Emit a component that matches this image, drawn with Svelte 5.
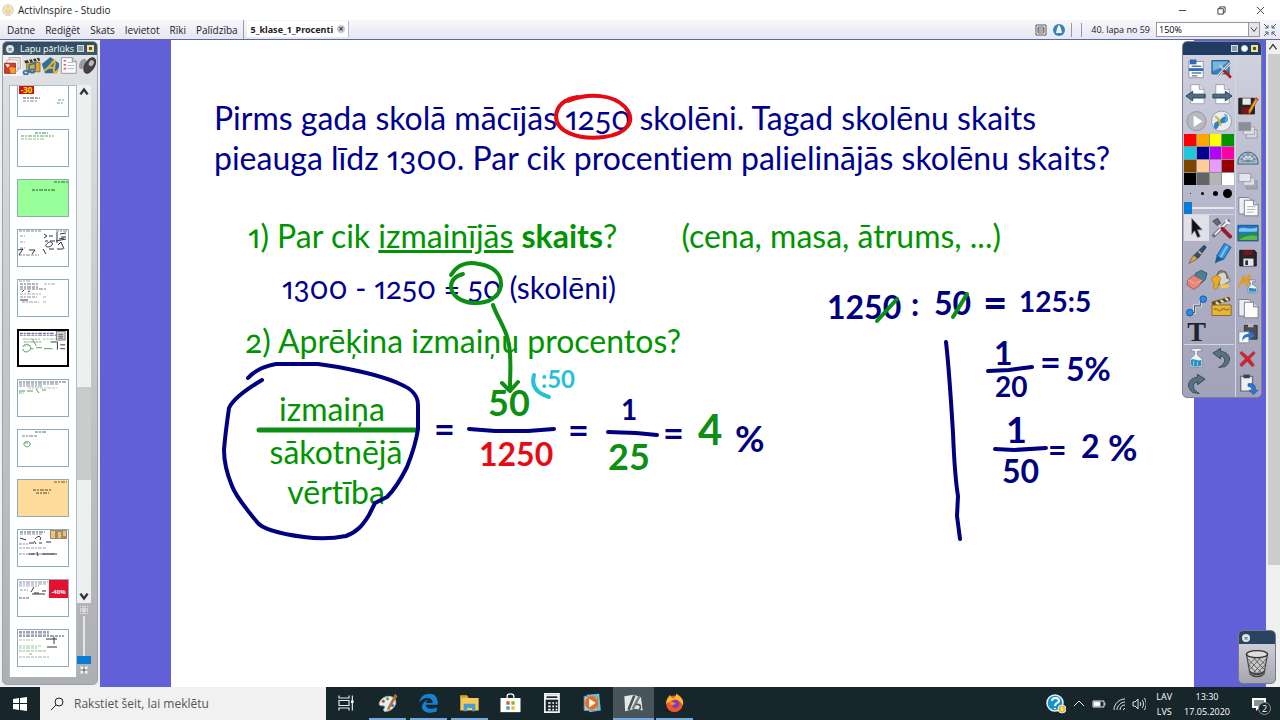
<script>
  const menus = ['Datne', 'Rediģēt', 'Skats', 'Ievietot', 'Rīki', 'Palīdzība'];

  const browserTabs = ['pages', 'media', 'shapes', 'notes', 'votes'];

  // lines: [x, y, width, colour] in a 52 x 38 box
  const pages = [
    { id: 35, kind: 'sale30', lines: [[22, 4, 12, '#b48'], [38, 4, 10, '#446'], [5, 18, 17, '#446'], [5, 21, 14, '#889'], [40, 20, 6, '#6a6'], [39, 23, 7, '#6a6']] },
    { id: 36, lines: [[17, 3, 13, '#384'], [3, 6, 33, '#5a5'], [3, 9, 23, '#8b8']] },
    { id: 37, bg: '#99ff99', lines: [[36, 2, 14, '#363'], [14, 10, 23, '#252']] },
    { id: 38, ink: 'M26 4l3 2-3 2m5-2h4m4-4v11m3-9l6-1m-5 4h5m-21 4h3m2 0h5m4-2l5-1m-18 7c3-5 8-3 6 0s-8 2-6 0m10-4l10-2m-8 6l3-3 3 7m-21 0l3 5m3-5h5m3 0h6m-45 1l5-1-4 6m10-5h6l-3 4', lines: [[1, 1, 22, '#888'], [2, 6, 5, '#99b'], [2, 12, 5, '#99b'], [2, 18, 5, '#99b'], [1, 25, 20, '#888'], [38, 1, 11, '#888']] },
    { id: 39, ink: 'M4 12l2-2m4 2l2-1M2 20h8', lines: [[1, 1, 12, '#99a'], [2, 4, 19, '#667'], [26, 4, 12, '#aaa'], [2, 7, 18, '#667'], [2, 9, 26, '#778'], [2, 14, 21, '#aaa'], [2, 17, 17, '#889'], [25, 17, 4, '#aaa'], [4, 22, 17, '#99a'], [25, 22, 4, '#aaa']] },
    { id: 40, current: true, ink: 'M33 12h7m0 0v8m3-5h5m-5 4h5', green: 'M4 17c3-5 9-2 8 2s-8 5-8 0m8 0h3m3-1h6m2 1h4m0 0h5M14 9l4 7', lines: [[1, 3, 35, '#448'], [1, 5, 43, '#668'], [4, 9, 18, '#7b7'], [25, 9, 16, '#9c9'], [5, 12, 18, '#88a'], [4, 16, 8, '#8b8']] },
    { id: 41, green: 'M1 11h6m2 0h6m3-2l3 4m3-3h4', lines: [[1, 2, 48, '#667'], [1, 4, 40, '#88a'], [1, 6, 24, '#88a'], [10, 8, 29, '#9c9'], [1, 13, 5, '#7b7']] },
    { id: 42, green: 'M6 13c3-3 7-1 6 2s-7 2-6-2', lines: [[17, 2, 12, '#384'], [4, 6, 15, '#778'], [7, 13, 4, '#7b7']] },
    { id: 43, bg: '#ffdc9a', lines: [[36, 2, 13, '#654'], [15, 10, 19, '#543'], [18, 13, 13, '#543']] },
    { id: 44, kind: 'photo', ink: 'M2 8l6 2m9-1c3-4 7-3 5 1M11 13h5m0-2l2 3m3-1h3m4-1h5M11 24h6m2-2l1 4m4-2h15', lines: [[2, 2, 25, '#556'], [2, 4, 22, '#88a'], [1, 14, 9, '#88a'], [1, 18, 27, '#99a'], [1, 24, 35, '#889']] },
    { id: 45, kind: 'sale40', ink: 'M13 12l3-5m0 6h5m3-2h4M14 14h13', lines: [[1, 2, 29, '#88a'], [1, 4, 27, '#99b'], [1, 6, 20, '#aab'], [2, 10, 8, '#99a'], [1, 18, 10, '#556']] },
    { id: 46, ink: 'M28 9h11m-3-2v7m-7 3h10', lines: [[1, 2, 31, '#446'], [1, 4, 30, '#88a'], [1, 6, 45, '#446'], [1, 10, 14, '#9c9'], [1, 16, 22, '#9c9'], [1, 18, 19, '#9c9'], [1, 21, 28, '#8b8'], [11, 24, 4, '#7b7'], [1, 27, 30, '#aaa']] }
  ];

  const topTools = ['menu', 'desktop', 'prev', 'next', 'play', 'paint'];
  const swatches = [
    ['red', '#ff0000'], ['orange', '#ffa500'], ['yellow', '#ffff00'], ['green', '#009400'],
    ['cyan', '#20c6dc'], ['navy', '#000096'], ['violet', '#b400ff'], ['pink', '#ff00a8'],
    ['brown', '#7d4600'], ['peach', '#ffcc99'], ['lilac', '#e79cff'], ['maroon', '#960000'],
    ['black', '#000000'], ['dark grey', '#646464'], ['grey', '#b4b4b4'], ['white', '#ffffff']
  ];
  const penSizes = [1, 3, 5, 9];
  const mainTools = ['select', 'tools', 'pen', 'highlighter', 'eraser', 'fill', 'connector', 'clapper', 'text', ''];
  const editTools = ['clear', 'undo', 'redo', ''];
  const sideTools = ['savepen', 'layers', 'protractor', 'stack', 'copypage', 'image', 'disk', 'cleanink', 'copy', 'paste', 'delete', 'clipboard'];

  const apps = [
    { name: 'taskview' },
    { name: 'palette', open: true },
    { name: 'edge', open: true },
    { name: 'explorer', open: true },
    { name: 'store' },
    { name: 'calc' },
    { name: 'player' },
    { name: 'inspire', open: true, active: true },
    { name: 'firefox', open: true }
  ];

  // handwritten figures: [text, x, baseline, colour, size]
  const notes = [
    ['50', 488, 416, 'green', 36],
    ['1250', 479, 466, 'red', 32],
    [':50', 541, 388, 'cyan', 24],
    ['=', 434, 442, 'navy', 36],
    ['=', 568, 443, 'navy', 36],
    ['1', 621, 420, 'navy', 28],
    ['25', 608, 470, 'green', 36],
    ['=', 663, 446, 'navy', 36],
    ['4', 698, 445, 'green', 42],
    ['%', 735, 452, 'navy', 36],
    ['1250', 827, 319, 'navy', 32],
    [':', 911, 316, 'navy', 32],
    ['50', 934, 315, 'navy', 32],
    ['=', 983, 318, 'navy', 42],
    ['125:5', 1019, 312, 'navy', 28],
    ['1', 994, 365, 'navy', 32],
    ['20', 995, 397, 'navy', 28],
    ['=', 1040, 375, 'navy', 36],
    ['5%', 1066, 381, 'navy', 32],
    ['1', 1006, 443, 'navy', 36],
    ['50', 1002, 483, 'navy', 32],
    ['=', 1048, 462, 'navy', 32],
    ['2', 1081, 458, 'navy', 32],
    ['%', 1108, 461, 'navy', 36]
  ];

  let search = $state('');
  let zoom = $state('150%');
  let thumbSize = $state(0);
  let penWidth = $state(0);
</script>

{#snippet icon(name)}
  <svg class="icon" viewBox="0 0 24 24" aria-hidden="true">
    {#if name === 'menu'}
      <path d="M4 5h15v17H4z" fill="#fff" stroke="#8a94a8" />
      <path d="M5 3h7v5H5z" fill="#3268b4" />
      <path d="M7 10h10M7 17h10M7 20h6" stroke="#6a7688" stroke-width="1.4" />
      <path d="M4 12h15v3H4z" fill="#2b6cc4" />
    {:else if name === 'desktop'}
      <path d="M2 4h18v14H2z" fill="#3b82bc" stroke="#2a5f92" />
      <path d="M3 5h16l-9 7-7 3z" fill="#79b6df" />
      <path d="M21 7L9 20" stroke="#dfe4ea" stroke-width="3" />
      <path d="M21 7L9 20" stroke="#59636f" />
      <path d="M10 9l6 6" stroke="#c6ccd4" stroke-width="2" />
      <path d="M15 15l6 6" stroke="#b01c26" stroke-width="3" stroke-linecap="round" />
    {:else if name === 'prev' || name === 'next'}
      <path d="M6 2h9l5 5v15H6z" fill="#fafbfc" stroke="#9da3b0" />
      <path d="M15 2v5h5" fill="#d9dde4" stroke="#9da3b0" />
      {#if name === 'prev'}
        <path d="M1 14l7-5v3h13v4H8v3z" fill="#4a6f86" stroke="#294455" />
      {:else}
        <path d="M23 14l-7-5v3H3v4h13v3z" fill="#4a6f86" stroke="#294455" />
      {/if}
    {:else if name === 'play'}
      <circle cx="12" cy="12" r="10" fill="#b7b9c0" stroke="#9294a0" />
      <path d="M9 6l9 6-9 6z" fill="#fff" />
    {:else if name === 'paint'}
      <circle cx="12" cy="12" r="10.500" fill="#e8edf2" stroke="#8fa0b0" />
      <path d="M4 18C4 11 8 14 12 9c4-4 9-1 6 3-3 3-7 1-9 5-1 4-4 4-5 1z" fill="#2f84c0" />
      <path d="M15 5c3 1 4 4 1 7" stroke="#63b3dd" stroke-width="2" fill="none" />
      <path d="M5 7c4 1 5 5 6 10" stroke="#e5b32e" stroke-width="2" fill="none" />
    {:else if name === 'select'}
      <path d="M7 2l11 12h-5l3 7-3 1-3-7-3 4z" fill="#111" stroke="#8d8f96" stroke-width=".7" />
    {:else if name === 'tools'}
      <path d="M4 20L19 5" stroke="#6d7480" stroke-width="4" stroke-linecap="round" />
      <path d="M5 19L19 5M17 3v4h4" stroke="#eceff2" stroke-width="2" fill="none" />
      <path d="M3 5l5-3 3 5-3 3z" fill="#606873" stroke="#444b55" />
      <path d="M9 9l4 4" stroke="#c8cdd3" stroke-width="2.500" />
      <path d="M13 13l8 8" stroke="#9c1a28" stroke-width="4" stroke-linecap="round" />
    {:else if name === 'pen'}
      <path d="M20 3l2 2-8 11-5 1 1-4z" fill="#31536d" stroke="#1e3547" />
      <path d="M14 9l3 3" stroke="#d7b463" stroke-width="2" />
      <path d="M9 13l4 4-9 5z" fill="#d8a94c" stroke="#7c5a22" stroke-width=".8" />
    {:else if name === 'highlighter'}
      <path d="M15 1l7 4-8 13-7-4z" fill="#2f8fdc" stroke="#1b5d9c" />
      <path d="M17 3l2 1-7 12-2-1z" fill="#79c2f3" />
      <path d="M7 14l7 4-5 2-4 2z" fill="#1c5b96" />
    {:else if name === 'eraser'}
      <path d="M11 5l6-3 6 3-2 7-5 4-7-4z" fill="#4b8094" stroke="#34606f" />
      <path d="M9 7l9 5-3 6-6 4-7-5 1-5z" fill="#e58677" stroke="#a35750" />
      <path d="M3 12l8 4 7-4" stroke="#f5b3a6" fill="none" />
    {:else if name === 'fill'}
      <path d="M7 6l9-3 5 10-10 6z" fill="#d9d5cb" stroke="#777265" />
      <path d="M8 7c0-7 10-6 10 4" stroke="#6f6a60" fill="none" stroke-width="1.500" />
      <path d="M2 10c5-5 10-1 9 2-3 4-2 7-4 9s-4 0-3-4-3-2-2-7z" fill="#e8ac26" stroke="#a87408" stroke-width=".7" />
      <path d="M10 19c2-3 9-3 10-1s-7 4-10 1z" fill="#f3c84e" />
    {:else if name === 'connector'}
      <path d="M5 19h5v-7h6V6h3" stroke="#e4e8ed" stroke-width="3" fill="none" />
      <path d="M5 19h5v-7h6V6h3" stroke="#4d5b6b" stroke-width="1.200" fill="none" />
      <circle cx="5" cy="19" r="3.500" fill="#2a8ce6" stroke="#1b5ca0" />
      <circle cx="19" cy="5" r="3.500" fill="#2a8ce6" stroke="#1b5ca0" />
    {:else if name === 'clapper'}
      <path d="M2 11h20v11H2z" fill="#e6b53d" stroke="#8d6a16" />
      <path d="M2 8l18-5 1 3-18 5z" fill="#5d4a1a" stroke="#6f5718" />
      <path d="M6 8l3 2M11 6l3 2M16 4l3 2" stroke="#f6e6b4" stroke-width="2" />
      <path d="M4 16c3-4 5 4 8 0s5 3 8-1" stroke="#ad7f14" fill="none" stroke-width="1.500" />
    {:else if name === 'clear'}
      <path d="M8 2h9v3h-4v4l5 4v8l-3 1H8l-3-2v-7l5-4V5H6z" fill="#eff3f6" stroke="#8992a0" />
      <path d="M6 14c4-2 7 2 11 0v6l-2 1H8l-2-2z" fill="#2d8dc3" />
      <path d="M9 15v5M13 16v4" stroke="#9bd4ee" />
    {:else if name === 'undo' || name === 'redo'}
      {#if name === 'undo'}
        <path d="M3 7l8-5v3c9 1 13 9 5 16l-7 1c8-4 8-11 2-12v3z" fill="#587080" stroke="#364b59" />
      {:else}
        <path d="M21 7l-8-5v3C4 6 0 14 8 21l7 1C7 18 7 11 13 10v3z" fill="#587080" stroke="#364b59" />
      {/if}
    {:else if name === 'savepen'}
      <path d="M2 4h17v17H2z" fill="#25272b" stroke="#111" />
      <path d="M6 4h9v7H6z" fill="#ece9e9" /><path d="M5 14h10v7H5z" fill="#7b151b" />
      <path d="M23 5l-8 14-2 2v-4l8-14z" fill="#f1a72b" stroke="#9c5a10" stroke-width=".8" />
      <path d="M21 3l3 2-2 2-3-2z" fill="#d45b45" />
    {:else if name === 'layers' || name === 'stack'}
      <path d="M10 11h12v9H10z" fill={name === 'stack' ? '#a2a5ad' : '#d6d8e0'} stroke="#90939d" />
      <path d="M7 8h12v8H7z" fill="#e0e1e7" stroke="#a2a4ae" />
      <path d="M2 3h13v9H2z" fill={name === 'stack' ? '#e4e5eb' : '#8b8d97'} stroke="#9497a1" />
    {:else if name === 'protractor'}
      <path d="M1 18a11 11 0 0 1 22 0v2H1z" fill="#a9bdce" stroke="#395972" />
      <path d="M5 17a7 7 0 0 1 14 0z" fill="#dbe5ef" stroke="#5a7a92" />
      <path d="M12 7v10M5 9l7 8 7-8M2 14l10 3 10-3" fill="none" stroke="#4c6b82" stroke-width=".7" />
    {:else if name === 'copypage' || name === 'copy'}
      <path d="M2 2h11l3 3v15H2z" fill="#eceef2" stroke="#777d88" />
      <path d="M8 5h10l5 5v12H8z" fill="#fdfdfd" stroke="#777d88" />
      <path d="M18 5v5h5" fill="#ccd0d8" stroke="#777d88" />
      {#if name === 'copypage'}<path d="M11 12h9M11 15h9M11 18h7" stroke="#a5abb7" />{/if}
    {:else if name === 'image'}
      <path d="M1 4h22v17H1z" fill="#1c77ce" stroke="#1a4d7d" />
      <path d="M2 8c6-4 10 2 20-2v5H2z" fill="#80c6f1" />
      <path d="M2 15c5-4 8 0 12-2 4-1 7-3 8-2v9H2z" fill="#278e3a" />
      <path d="M2 20c6-4 12-6 20-4v4z" fill="#56b956" />
    {:else if name === 'disk'}
      <path d="M3 4h16l2 2v15H3z" fill="#25272b" stroke="#111" />
      <path d="M7 4h10v5H7z" fill="#7b151b" /><path d="M7 13h11v8H7z" fill="#e6e6e8" /><path d="M9 15h3v5H9z" fill="#303238" />
    {:else if name === 'cleanink'}
      <path d="M2 16L8 4l-1 9 7-10-3 11 5-5" stroke="#e09a24" stroke-width="2.200" fill="none" stroke-linecap="round" />
      <path d="M13 9h7v2h-3v3l5 3v6H12v-5l3-4z" fill="#eef2f6" stroke="#7f8999" />
      <path d="M13 18c3-1 5 1 8 0v4h-8z" fill="#2d8dc3" />
    {:else if name === 'paste'}
      <path d="M8 3h14v15H8z" fill="#4a4f59" stroke="#2c3038" /><path d="M12 1h6v4h-6z" fill="#b5b9c0" />
      <path d="M2 10h11v12H2z" fill="#fafbfd" stroke="#868d99" />
      <path d="M6 20c-1-6 3-8 8-8V9l5 5-5 5v-3c-4-1-6 1-8 4z" fill="#2e74d2" />
    {:else if name === 'delete'}
      <path d="M5 4l7 6 6-6 2 2-6 6 5 7-2 2-6-6-6 6-2-3 6-6-6-6z" fill="#cc2434" stroke="#b0303c" stroke-width=".6" />
    {:else if name === 'clipboard'}
      <path d="M4 3h13v16H4z" fill="#eceff4" stroke="#6b717d" stroke-width="1.500" />
      <path d="M7 1h7v4H7z" fill="#3d424d" />
      <path d="M12 11c6-1 9 2 8 7h3l-5 5-5-5h3c0-3-1-4-4-4z" fill="#2e74d2" stroke="#1c4d93" stroke-width=".6" />
    {:else if name === 'trash'}
      <path d="M3 4l3 17c3 3 9 3 12 0l3-17z" fill="#c9c9cb" stroke="#444" />
      <path d="M4 8l13 13M8 6l10 11M12 6l7 7M20 8L8 21M16 6L6 17M12 6l-7 7M5 13l8 9M19 13l-8 9" fill="none" stroke="#4c4c50" stroke-width=".7" />
      <ellipse cx="12" cy="4" rx="9" ry="3" fill="#dedee0" stroke="#333" stroke-width="1.200" />
      <path d="M6 20c3 3 9 3 12 0v-2c-4 3-9 3-12 0z" fill="#444" />
    {:else if name === 'pages'}
      <path d="M8 2h14v14H8z" fill="#f8f4ee" stroke="#9b8e80" /><path d="M5 5h14v14H5z" fill="#fff" stroke="#a58" stroke-width=".6" />
      <path d="M2 9h14v13H2z" fill="#d63b28" stroke="#8d2114" /><path d="M8 14l8 1v7h-6z" fill="#f0a52d" /><path d="M3 10l6 1-3 4z" fill="#fff" />
    {:else if name === 'media'}
      <path d="M6 8h17v12H6z" fill="#e6ab29" stroke="#7d5c12" /><path d="M3 6l19-4 1 4-19 3z" fill="#333" /><path d="M8 5l2 3M13 4l2 3M18 3l2 3" stroke="#fff" stroke-width="1.500" />
      <path d="M9 11v9M2 21c0-3 6-3 6 0s-6 3-6 0M9 11l8-2v9M10 19c0-3 6-3 6 0s-6 3-6 0" stroke="#2e74a8" stroke-width="2" fill="none" />
    {:else if name === 'shapes'}
      <path d="M12 1l12 9-4 12H5L1 10z" fill="#2f6f9e" /><path d="M4 19C12 14 14 7 17 6c2 3-2 14 0 15 2 0 4-2 5-4M8 15h10" stroke="#efb434" stroke-width="2.500" fill="none" />
    {:else if name === 'notes'}
      <path d="M3 2h14l5 5v15H3z" fill="#fafafa" stroke="#84878e" /><path d="M17 2v5h5" fill="#d1d3d8" stroke="#84878e" /><path d="M6 6h3M6 11h3M6 16h3" stroke="#d15b80" stroke-width="2" /><path d="M11 8h7M11 12h8M11 16h8" stroke="#a4a8b2" />
    {:else if name === 'votes'}
      <ellipse cx="6" cy="10" rx="4" ry="7" fill="#969aa2" transform="rotate(25 6 10)" /><ellipse cx="15" cy="12" rx="6" ry="11" fill="#4b4243" stroke="#292425" transform="rotate(30 15 12)" /><ellipse cx="17" cy="9" rx="3" ry="4" fill="#b9b9be" transform="rotate(30 17 9)" />
    {:else if name === 'taskview'}
      <path d="M3 3v3h12V3M3 21v-3h12v3M3 9h12v6H3zM19 3v18" fill="none" stroke="#e6eaeb" stroke-width="1.400" /><path d="M17.500 9h3v3h-3z" fill="#fff" />
    {:else if name === 'palette'}
      <path d="M2 13C3 6 13 1 20 6c5 5 0 15-9 16-5 1-4-3-2-5 0-3-7 0-7-4z" fill="#e5edf1" stroke="#9eb8c4" />
      <circle cx="7" cy="10" r="1.800" fill="#cf3c32" /><circle cx="12" cy="7" r="1.800" fill="#5d9e3c" /><circle cx="18" cy="15" r="1.800" fill="#2b77bb" /><circle cx="14" cy="19" r="1.800" fill="#e0b62d" />
      <path d="M21 1l3 3-9 14-4 3 2-5z" fill="#b66d39" />
    {:else if name === 'edge'}
      <path d="M1 11C2 5 7 1 13 1c7 0 11 5 10 13H9c0 6 8 6 13 3v5C10 27 0 20 6 12c2-3 4-4 6-4-2 1-3 2-3 4h8c0-8-11-8-16-1z" fill="#1780d4" />
    {:else if name === 'explorer'}
      <path d="M1 3h8l2 3h12v15H1z" fill="#f6c95b" /><path d="M1 3h8l2 3H1z" fill="#d99e2b" /><path d="M5 13h14v9h-4v-4H9v4H5z" fill="#4a9cd2" />
    {:else if name === 'store'}
      <path d="M8 8V4c0-4 8-4 8 0v4" stroke="#fff" stroke-width="1.500" fill="none" /><path d="M0 6h24v17H0z" fill="#fff" /><path d="M7 10h4v4H7z" fill="#e8502c" /><path d="M13 10h4v4h-4z" fill="#79b82f" /><path d="M7 16h4v4H7z" fill="#2a9fdc" /><path d="M13 16h4v4h-4z" fill="#f5b81d" />
    {:else if name === 'calc'}
      <path d="M4 1h17v22H4z" fill="none" stroke="#f2f4f4" stroke-width="2" /><path d="M4 2h17v6H4z" fill="#f2f4f4" /><path d="M6 4h13v2H6z" fill="#17262b" />
      <path d="M8 12h3m2 0h2m2 0h2M8 16h3m2 0h2m2 0h2M8 20h3m2 0h2m2 0h2" stroke="#fff" stroke-width="2" />
    {:else if name === 'player'}
      <path d="M5 2l15-1 2 20-14 2z" fill="#77bcdf" /><path d="M2 4h16v17H2z" fill="#a8c8d8" stroke="#6a9db8" /><circle cx="11" cy="12" r="8" fill="#e46f22" /><path d="M8 7l8 5-8 5z" fill="#fff" />
    {:else if name === 'inspire'}
      <path d="M1 4l11-2 9 3 2 16-9-2-12 3z" fill="#e4e6e7" /><path d="M13 3L6 20" stroke="#4b5257" stroke-width="3" /><path d="M19 4l-8 15" stroke="#777f84" stroke-width="3" /><path d="M15 14c6-2 7 5 3 6" stroke="#555" stroke-width="2" fill="none" />
    {:else if name === 'firefox'}
      <circle cx="12" cy="13" r="10" fill="#f2552c" /><path d="M2 13C2 8 4 5 7 2c0 3 2 4 4 4C13 5 14 3 14 1c6 3 10 8 8 14C19 8 12 6 7 10z" fill="#fdb92b" /><circle cx="13" cy="13" r="5" fill="#7840bd" /><path d="M6 11c3-1 5 0 8 2-3 0-3 3-7 1z" fill="#ff8b24" />
    {/if}
  </svg>
{/snippet}

<div class="window">
  <header class="titlebar">
    <svg class="logo" viewBox="0 0 24 24" aria-hidden="true">
      <circle cx="12" cy="12" r="11" fill="#eee3c9" stroke="#bdb7aa" />
      <path d="M12 3l4 12-4 6-4-6z" fill="#f4bd48" /><path d="M12 8v9" stroke="#fff" stroke-width="2" />
    </svg>
    <span class="title">ActivInspire - Studio</span>
    <div class="window-buttons">
      <button aria-label="Minimizēt"><svg viewBox="0 0 10 10"><path d="M1 5h8" /></svg></button>
      <button aria-label="Atjaunot"><svg viewBox="0 0 10 10"><path d="M1 3h6v6H1zM3 3V1h6v6H7" /></svg></button>
      <button aria-label="Aizvērt"><svg viewBox="0 0 10 10"><path d="M1 1l8 8M9 1L1 9" /></svg></button>
    </div>
  </header>

  <nav class="menubar">
    <div class="menus">
      {#each menus as menu}
        <button>{menu}</button>
      {/each}
    </div>
    <div class="doc-tab">
      <span>5_klase_1_Procenti</span>
      <button class="round" aria-label="Aizvērt cilni">×</button>
    </div>
    <div class="status">
      <svg class="mini" viewBox="0 0 12 12" aria-hidden="true"><path d="M1 1h10v10H1z" fill="#fff" stroke="#555" /><path d="M3 3h6v6H3zM3 5h6M3 7h6" stroke="#555" fill="none" /></svg>
      <svg class="mini" viewBox="0 0 12 12" aria-hidden="true"><circle cx="6" cy="6" r="6" fill="#3c83b5" /><path d="M6 1c2 2 2 4 3 8H3c1-4 1-6 3-8z" fill="#eef6fb" /></svg>
      <i></i><i></i>
      <span class="counter">40. lapa no 59</span>
      <div class="zoom">
        <select aria-label="Tālummaiņa" bind:value={zoom}>
          <option>100%</option>
          <option>150%</option>
          <option>200%</option>
        </select>
        <svg viewBox="0 0 10 12" aria-hidden="true"><path d="M2 4l3 4 3-4" /></svg>
      </div>
      <svg class="fit" viewBox="0 0 14 14" aria-hidden="true"><path d="M1 1l4 4M13 1L9 5M1 13l4-4M13 13L9 9M5 2v3H2M9 2v3h3M5 12V9H2M9 12V9h3" /></svg>
    </div>
  </nav>

  <main class="workspace">
    <aside class="browser">
      <div class="bar">
        <button class="round" aria-label="Aizvērt">×</button>
        <span>Lapu pārlūks</span>
        <b></b><b class="pin"></b>
      </div>
      <div class="tabs">
        {#each browserTabs as tab, i}
          <button class:on={i === 0} aria-label={tab}>{@render icon(tab)}</button>
        {/each}
      </div>
      <div class="browser-body">
        <div class="list">
          {#each pages as page (page.id)}
            <div class="page {page.kind ?? ''}" class:current={page.current} style:background={page.bg}>
              <svg viewBox="0 0 50 36" preserveAspectRatio="xMidYMax slice" aria-hidden="true">
                {#each page.lines as [x, y, width, colour]}
                  <path d="M{x} {y}h{width}" stroke={colour} stroke-dasharray="3 1 2 1 4 1" />
                {/each}
                {#if page.ink}<path d={page.ink} fill="none" stroke="#334" stroke-width="1" />{/if}
                {#if page.green}<path d={page.green} fill="none" stroke="#5a9a62" stroke-width="1" />{/if}
                {#if page.kind === 'photo'}
                  <path d="M32 0h17v9H32z" fill="#a98955" /><path d="M33 1h4v7h-4zM40 2h3v6h-3zM45 1h3v5h-3z" fill="#e0c68c" />
                {/if}
                {#if page.current}<path d="M39 1h9v9h-9z" fill="#ddd" stroke="#777" /><path d="M41 4h5M41 6h5M41 8h5" stroke="#555" />{/if}
              </svg>
              {#if page.kind === 'sale30'}<span class="tag">-30</span>{/if}
              {#if page.kind === 'sale40'}<span class="tag">-40%</span>{/if}
            </div>
          {/each}
        </div>
        <div class="side">
          <div class="scroll">
            <svg viewBox="0 0 10 10"><path d="M2 7l3-4 3 4" /></svg>
            <div class="scroll-thumb"></div>
            <svg viewBox="0 0 10 10"><path d="M2 3l3 4 3-4" /></svg>
          </div>
          <div class="sizer">
            <svg viewBox="0 0 8 8"><path d="M0 0h8v8H0z" fill="#999" /><path d="M0 3h8M0 5h8M3 0v8M5 0v8" /></svg>
            <input type="range" min="0" max="100" aria-label="Sīktēlu lielums" bind:value={thumbSize} />
            <svg viewBox="0 0 8 8"><path d="M0 0h8v8H0z" fill="#777" /><path d="M1 1h2v2H1zM5 1h2v2H5zM1 5h2v2H1zM5 5h2v2H5z" fill="#fff" /></svg>
          </div>
        </div>
      </div>
    </aside>

    <section class="stage">
      <article class="slide">
        <p class="question">Pirms gada skolā mācījās 1250 skolēni. Tagad skolēnu skaits<br />pieauga līdz 1300. Par cik procentiem palielinājās skolēnu skaits?</p>
        <p class="step first"><span>1) Par cik <u>izmainījās</u> <b>skaits</b>?</span><span>(cena, masa, ātrums, ...)</span></p>
        <p class="sum">1300 - 1250 = 50 (skolēni)</p>
        <p class="step">2) Aprēķina izmaiņu procentos?</p>
        <div class="ratio">
          <span>izmaiņa&nbsp;</span>
          <hr />
          <span>sākotnējā<br />vērtība</span>
        </div>

        <svg class="ink" viewBox="171 40 1023 646">
          {#each notes as [text, x, y, colour, size]}
            <text {x} {y} class="{colour}-text" font-size={size}>{text}</text>
          {/each}
          <g class="red"><path d="M568 101C590 92 614 95 625 107c12 14 2 27-21 30-26 3-48-5-48-21 1-11 9-17 22-19" /></g>
          <g class="green">
            <path d="M451 275c6-10 16-14 28-11 14 2 23 10 22 22-2 11-13 18-28 17-12-1-21-7-22-16 0-7 4-11 12-13" />
            <path d="M493 305c4 12 12 22 15 35 4 15 2 30 2 49M502 383l8 8 8-9" />
            <path class="divider" d="M259 430H416" />
            <path d="M877 321l20-22M953 317l14-23" />
          </g>
          <g class="navy">
            <path d="M248 378c7-8 17-12 28-14h42l20 3c22 4 45 9 62 17 12 5 18 11 18 21v24c-2 14-5 23-11 38-6 12-12 22-20 30l-12 6-6 12c-6 10-12 17-23 21-15 3-27 3-42 1-23-3-42-8-47-15-9-11-21-25-25-36-5-12-8-23-8-36 1-14 3-28 5-42 4-9 18-19 33-28" />
            <path d="M469 429l26 2h33l26-2M608 432l28 1 21 2M988 371l21-1 23-3M995 449l19 1 32-2M946 342c3 25 5 58 7 91 1 25 2 45 5 63l-1 20 3 23" />
          </g>
          <g class="cyan"><path d="M534 375c-3 11 2 18 15 22" /></g>
        </svg>
      </article>

      <div class="toolbox">
        <div class="bar"><b></b><b class="dot"></b><b class="pin"></b></div>
        <div class="tool-columns">
          <div class="primary">
            <div class="tools top">
              {#each topTools as tool}
                <button aria-label={tool}>{@render icon(tool)}</button>
              {/each}
            </div>
            <div class="swatches">
              {#each swatches as [name, colour]}
                <button aria-label={name} style:background={colour}></button>
              {/each}
            </div>
            <div class="sizes">
              {#each penSizes as size}
                <button aria-label="Pildspalva {size}"><i style:width="{size}px" style:height="{size}px"></i></button>
              {/each}
            </div>
            <input type="range" min="0" max="100" aria-label="Pildspalvas platums" bind:value={penWidth} />
            <div class="tools main">
              {#each mainTools as tool}
                {#if tool === 'text'}
                  <button class="letter" aria-label={tool}>T</button>
                {:else if tool}
                  <button class:on={tool === 'select'} aria-label={tool}>{@render icon(tool)}</button>
                {:else}
                  <span></span>
                {/if}
              {/each}
            </div>
            <div class="tools edit">
              {#each editTools as tool}
                {#if tool}<button aria-label={tool}>{@render icon(tool)}</button>{:else}<span></span>{/if}
              {/each}
            </div>
          </div>
          <div class="secondary">
            {#each sideTools as tool}
              <button aria-label={tool}>{@render icon(tool)}</button>
            {/each}
          </div>
        </div>
      </div>
    </section>

    <div class="page-scroll">
      <svg viewBox="0 0 10 10"><path d="M2 7l3-4 3 4" /></svg>
      <div></div>
    </div>

    <div class="bin">
      <div class="bar"><button class="round" aria-label="Aizvērt">×</button></div>
      <button class="bin-button" aria-label="Atkritne">{@render icon('trash')}</button>
    </div>
  </main>

  <footer class="taskbar">
    <button class="start" aria-label="Sākt">
      <svg viewBox="0 0 14 14"><path d="M0 2l6-1v5H0zM7 1l7-1v6H7zM0 7h6v6l-6-1zM7 7h7v7l-7-1z" fill="#fff" /></svg>
    </button>
    <label class="search">
      <svg viewBox="0 0 14 14"><circle cx="9" cy="5" r="4" /><path d="M6 8l-5 5" /></svg>
      <input type="text" placeholder="Rakstiet šeit, lai meklētu" bind:value={search} />
    </label>
    <div class="apps">
      {#each apps as app}
        <button class:open={app.open} class:active={app.active} aria-label={app.name}>{@render icon(app.name)}</button>
      {/each}
    </div>
    <div class="tray">
      <svg class="help" viewBox="0 0 20 20" aria-hidden="true">
        <circle cx="9" cy="9" r="8" fill="#1993c9" stroke="#e7f5fa" stroke-width="1.500" />
        <path d="M6 7c0-4 7-4 7 0 0 2-4 2-4 5M9 14v1" stroke="#fff" stroke-width="2" fill="none" />
        <circle cx="16" cy="15" r="4" fill="#efb72e" /><path d="M16 13v4" stroke="#fff" />
      </svg>
      <svg viewBox="0 0 14 14"><path d="M2 9l5-5 5 5" /></svg>
      <svg viewBox="0 0 14 14"><path d="M1 4h11v6H1zM13 6v2" /><path d="M2 5h6v4H2z" fill="#fff" /></svg>
      <svg viewBox="0 0 14 14"><path d="M2 13C2 7 7 2 13 2M5 13c0-4 4-8 8-8M8 13c0-3 2-5 5-5M11 13l2-2" /></svg>
      <svg viewBox="0 0 14 14"><path d="M1 5h2l3-3v10L3 9H1zM8 5c1 1 1 3 0 4M10 3c2 2 2 6 0 8M12 1c3 3 3 9 0 12" /></svg>
      <div class="stack lang"><span>LAV</span><span>LVS</span></div>
      <div class="stack clock"><span>13:30</span><span>17.05.2020</span></div>
      <div class="notify">
        <svg viewBox="0 0 14 14"><path d="M0 1h14v10H7l-3 3v-3H0z" fill="#fff" stroke="none" /><path d="M2 4h10M2 6h10M2 8h7" stroke="#17262b" /></svg>
        <span>2</span>
      </div>
    </div>
  </footer>
</div>

<style>
  :global(body) {
    margin: 0;
  }
  * {
    box-sizing: border-box;
  }
  button {
    border: 0;
    padding: 0;
    margin: 0;
    background: none;
    font: inherit;
    color: inherit;
  }
  .window {
    display: flex;
    flex-direction: column;
    height: 100vh;
    overflow: hidden;
    font-family: 'Open Sans', 'Noto Sans', sans-serif;
    font-size: 10px;
    color: #222;
  }
  svg {
    display: block;
  }
  .icon {
    width: 100%;
    height: 100%;
  }

  /* title and menu */
  .titlebar {
    display: flex;
    align-items: center;
    height: 20px;
    padding-left: 2px;
    gap: 4px;
    background: #fff;
  }
  .logo {
    width: 12px;
    height: 12px;
  }
  .window-buttons {
    display: flex;
    margin-left: auto;
  }
  .window-buttons button {
    width: 39px;
    display: grid;
    place-items: center;
  }
  .window-buttons svg {
    width: 9px;
    height: 9px;
    fill: none;
    stroke: #333;
  }
  .menubar {
    display: flex;
    height: 20px;
    background: linear-gradient(#f7f7fb, #e6e6f4);
    border-bottom: 1px solid #5a6aa0;
    white-space: nowrap;
  }
  .menus {
    display: flex;
    align-items: center;
    gap: 10px;
    padding: 0 5px 0 7px;
    border-right: 1px solid #99a;
  }
  .doc-tab {
    display: flex;
    align-items: center;
    gap: 4px;
    margin: 1px 0 2px 3px;
    padding: 0 3px 0 4px;
    background: #fff;
    border-right: 1px solid #bbc;
    font: bold 9px 'Noto Sans', sans-serif;
  }
  .round {
    width: 8px;
    height: 8px;
    border-radius: 50%;
    background: #c3c7cc;
    color: #333;
    font-size: 8px;
    line-height: 8px;
  }
  .status {
    display: flex;
    align-items: center;
    margin-left: auto;
    gap: 6px;
  }
  .status i {
    width: 1px;
    height: 14px;
    background: #99a;
    margin-right: 3px;
  }
  .mini {
    width: 12px;
    height: 12px;
  }
  .counter {
    font-size: 9px;
  }
  .zoom {
    display: grid;
  }
  .zoom > * {
    grid-area: 1 / 1;
  }
  .zoom select {
    appearance: none;
    width: 104px;
    height: 15px;
    padding: 0 2px;
    border: 1px solid #999;
    border-radius: 0;
    background: #fff;
    font: 9px 'Open Sans', sans-serif;
  }
  .zoom svg {
    justify-self: end;
    width: 12px;
    height: 15px;
    background: #e4e4e8;
    border: 1px solid #999;
    fill: none;
    stroke: #444;
    pointer-events: none;
  }
  .fit {
    width: 14px;
    height: 14px;
    margin-left: -3px;
    margin-right: 3px;
    fill: none;
    stroke: #52617a;
  }

  .workspace {
    position: relative;
    display: flex;
    flex: 1;
    min-height: 0;
    background: #eef0f4;
  }
  .bar {
    display: flex;
    flex: none;
    align-items: center;
    gap: 3px;
    height: 13px;
    padding: 0 3px;
    background: linear-gradient(#2d4c63, #3f586a);
    color: #fff;
    border-radius: 4px 4px 0 0;
  }
  .bar .round {
    background: #dfe4e8;
  }
  .bar b {
    width: 7px;
    height: 7px;
    background: #8c9cab;
    border: 1px solid #d5dce2;
  }
  .bar .dot {
    border-radius: 50%;
    background: #fff;
  }
  .bar .pin {
    background: #6a5210;
    border: 2px solid #efdf9c;
  }

  /* page browser */
  .browser {
    display: flex;
    flex-direction: column;
    width: 96px;
    flex: none;
    margin: 1px 2px 2px;
    border: 1px solid #9da1a8;
    border-radius: 5px;
    background: linear-gradient(#e2e3e6, #c8cacd 40%, #adafb2);
  }
  .browser .bar span {
    margin-left: auto;
    white-space: nowrap;
    font-size: 9px;
  }
  .tabs {
    display: flex;
    height: 23px;
  }
  .tabs button {
    width: 19px;
    height: 21px;
  }
  .tabs .on {
    background: #f3f4f6;
  }
  .browser-body {
    display: flex;
    flex: 1;
    min-height: 0;
    padding: 7px 5px 7px 6px;
  }
  .list {
    display: flex;
    flex-direction: column;
    justify-content: flex-end;
    gap: 12px;
    width: 68px;
    padding: 0 7px 10px;
    overflow: hidden;
    background: #fff;
    border: 1px solid #a9bdca;
    border-bottom: 0;
  }
  .page {
    position: relative;
    height: 38px;
    flex: none;
    border: 1px solid #8faab8;
    background: #fff;
  }
  .page svg {
    width: 100%;
    height: 100%;
  }
  .page.current {
    border: 2px solid #000;
  }
  .page.sale30 {
    height: 31px;
    border-top: 0;
  }
  .tag {
    position: absolute;
    top: 0;
    right: 0;
    width: 19px;
    padding-top: 7px;
    height: 18px;
    background: #e3122f;
    color: #fff;
    font-size: 6px;
    line-height: 10px;
    font-weight: bold;
    text-align: center;
  }
  .sale30 .tag {
    left: 1px;
    width: 15px;
    height: 8px;
    padding: 0;
    line-height: 8px;
    font-size: 8px;
    color: #ffe11a;
    background: #c81410;
  }
  .side {
    display: flex;
    flex-direction: column;
    width: 14px;
  }
  .scroll {
    display: flex;
    flex-direction: column;
    flex: 1;
    background: #eef0f0;
  }
  .scroll svg {
    width: 12px;
    height: 14px;
    fill: none;
    stroke: #333;
    stroke-width: 2;
    margin: 0 1px;
  }
  .scroll-thumb {
    height: 18%;
    margin: 288px 0 auto;
    background: #cacccc;
  }
  .sizer {
    display: flex;
    flex-direction: column;
    align-items: center;
    height: 74px;
    padding: 3px 0;
    gap: 2px;
  }
  .sizer svg {
    width: 8px;
    height: 8px;
    fill: none;
    stroke: #eee;
    stroke-width: 1;
  }
  input[type='range'] {
    appearance: none;
    margin: 0;
    background: none;
  }
  .sizer input {
    flex: 1;
    min-height: 0;
    width: 14px;
    writing-mode: vertical-lr;
    direction: rtl;
  }
  .sizer input::-webkit-slider-runnable-track {
    width: 2px;
    background: #e4e6e8;
  }
  .sizer input::-webkit-slider-thumb {
    appearance: none;
    width: 14px;
    height: 8px;
    margin-left: -6px;
    background: #0a7bd6;
  }

  /* slide */
  .stage {
    position: relative;
    flex: 1;
    min-width: 0;
    padding: 0 72px 0 71px;
    background: #6260d6;
  }
  .slide {
    position: relative;
    height: 100%;
    padding: 58px 0 0 43px;
    overflow: hidden;
    background: #fff;
    color: #000090;
    font: 32px/40px Lato, 'Open Sans', sans-serif;
    font-variant-ligatures: none;
    font-variant-numeric: proportional-nums oldstyle-nums;
    white-space: nowrap;
  }
  .slide p {
    margin: 0;
  }
  .question {
    padding-bottom: 38px;
  }
  .step {
    color: #009400;
    padding-left: 31px;
  }
  .first {
    display: flex;
    gap: 64px;
    padding-left: 34px;
    padding-bottom: 11px;
  }
  .sum {
    padding-left: 68px;
    padding-bottom: 14px;
    font-size: 30px;
  }
  .ratio {
    display: flex;
    flex-direction: column;
    width: 158px;
    margin: 28px 0 0 43px;
    text-align: center;
    color: #009400;
  }
  .ratio hr {
    width: 100%;
    height: 3px;
    margin: 0;
    border: 0;
    background: #009400;
  }
  .ink {
    position: absolute;
    top: 0;
    left: 0;
    width: 1023px;
    height: 646px;
    fill: none;
    stroke-width: 4;
    stroke-linecap: round;
    stroke-linejoin: round;
  }
  .red { stroke: #e60a14; }
  .green { stroke: #0c8f12; }
  .navy { stroke: #000080; }
  .cyan { stroke: #27c0d8; }
  .divider {
    stroke-width: 5;
  }
  .ink text {
    font-family: Lato, sans-serif;
    font-weight: 700;
    font-variant-numeric: normal;
    stroke: none;
  }
  .red-text { fill: #e60a14; }
  .green-text { fill: #0c8f12; }
  .navy-text { fill: #000080; }
  .cyan-text { fill: #27c0d8; }

  /* floating toolbox */
  .toolbox {
    position: absolute;
    top: 1px;
    right: 4px;
    width: 80px;
    height: 357px;
    display: flex;
    flex-direction: column;
    border: 1px solid #7d7f92;
    border-radius: 5px;
    background: linear-gradient(#d2d4e0, #b3b4c8 50%, #a2a3b9);
  }
  .toolbox .bar {
    justify-content: flex-end;
    background: #213c63;
  }
  .tool-columns {
    display: flex;
    flex: 1;
    min-height: 0;
    padding: 0 1px;
  }
  .primary {
    display: flex;
    flex-direction: column;
    width: 52px;
    padding-right: 1px;
    border-right: 1px solid #d6d7e4;
  }
  .tools {
    display: grid;
    grid-template-columns: 1fr 1fr;
    grid-auto-rows: 1fr;
  }
  .tools button,
  .secondary button {
    min-height: 0;
    padding: 1px;
  }
  .tools .letter {
    padding: 0;
    font: bold 28px/25px 'Liberation Serif', serif;
    color: #20242a;
  }
  .top {
    height: 79px;
  }
  .main {
    flex: 5;
    border-top: 1px solid #d6d7e4;
  }
  .edit {
    flex: 2;
    border-top: 1px solid #d6d7e4;
  }
  .main .on {
    background: #dfe0e8;
  }
  .swatches {
    display: grid;
    grid-template-columns: repeat(4, 1fr);
    gap: 1px;
    background: #8f8d98;
  }
  .swatches button {
    height: 12px;
  }
  .sizes {
    display: grid;
    grid-template-columns: repeat(4, 1fr);
    height: 16px;
  }
  .sizes button {
    display: grid;
    place-items: center;
  }
  .sizes i {
    border-radius: 50%;
    background: #000;
  }
  .primary input {
    width: 100%;
    height: 13px;
  }
  .primary input::-webkit-slider-runnable-track {
    height: 2px;
    background: #e8e9f0;
  }
  .primary input::-webkit-slider-thumb {
    appearance: none;
    width: 8px;
    height: 12px;
    margin-top: -5px;
    background: #0a7bd6;
  }
  .secondary {
    display: grid;
    grid-auto-rows: 1fr;
    flex: 1;
    padding-top: 38px;
  }
  .page-scroll {
    display: flex;
    flex-direction: column;
    width: 14px;
    background: #f0f0f0;
  }
  .page-scroll svg {
    width: 12px;
    height: 14px;
    margin-left: 1px;
    fill: none;
    stroke: #333;
  }
  .page-scroll div {
    height: 79%;
    background: #cdcdcd;
    margin-left: 2px;
  }
  .bin {
    position: absolute;
    right: 4px;
    bottom: 3px;
    width: 38px;
    border: 1px solid #77798a;
    border-radius: 5px;
    background: linear-gradient(#d9dae2, #a5a6ae);
  }
  .bin .bar {
    background: #2a4362;
  }
  .bin-button {
    display: block;
    width: 100%;
    height: 39px;
    padding: 4px;
  }

  /* taskbar */
  .taskbar {
    display: flex;
    height: 33px;
    background: #17262b;
    color: #fff;
  }
  .start {
    width: 40px;
    display: grid;
    place-items: center;
  }
  .start svg {
    width: 14px;
    height: 14px;
  }
  .search {
    display: flex;
    align-items: center;
    gap: 10px;
    width: 286px;
    padding: 0 10px;
    background: #f1f1f1;
  }
  .search svg {
    width: 14px;
    height: 14px;
    fill: none;
    stroke: #222;
  }
  .search input {
    flex: 1;
    min-width: 0;
    border: 0;
    padding: 0;
    background: none;
    font: 12px 'Open Sans', sans-serif;
  }
  .search input::placeholder {
    color: #555;
  }
  .apps {
    display: flex;
  }
  .apps button {
    width: 41px;
    padding: 6px 10px 5px;
    border-bottom: 2px solid transparent;
    background-clip: padding-box;
  }
  .apps .open {
    border-image: linear-gradient(90deg, transparent 8%, #76a9dc 8%, #76a9dc 92%, transparent 92%) 1;
  }
  .apps .active {
    background: #47545a;
    border-image: none;
    border-color: #76a9dc;
  }
  .tray {
    display: flex;
    align-items: center;
    gap: 6px;
    margin-left: auto;
    padding-right: 14px;
  }
  .tray svg {
    width: 14px;
    height: 14px;
    fill: none;
    stroke: #e4e8e9;
  }
  .tray .help {
    width: 20px;
    height: 20px;
  }
  .stack {
    display: flex;
    flex-direction: column;
    text-align: center;
    font-size: 9px;
    line-height: 15px;
  }
  .lang {
    margin-left: 4px;
  }
  .clock {
    margin: 0 16px 0 6px;
  }
  .notify {
    position: relative;
  }
  .notify span {
    position: absolute;
    left: 6px;
    top: 5px;
    width: 13px;
    height: 13px;
    border: 1px solid #89959a;
    border-radius: 50%;
    background: #17262b;
    font-size: 9px;
    line-height: 11px;
    text-align: center;
  }
</style>
